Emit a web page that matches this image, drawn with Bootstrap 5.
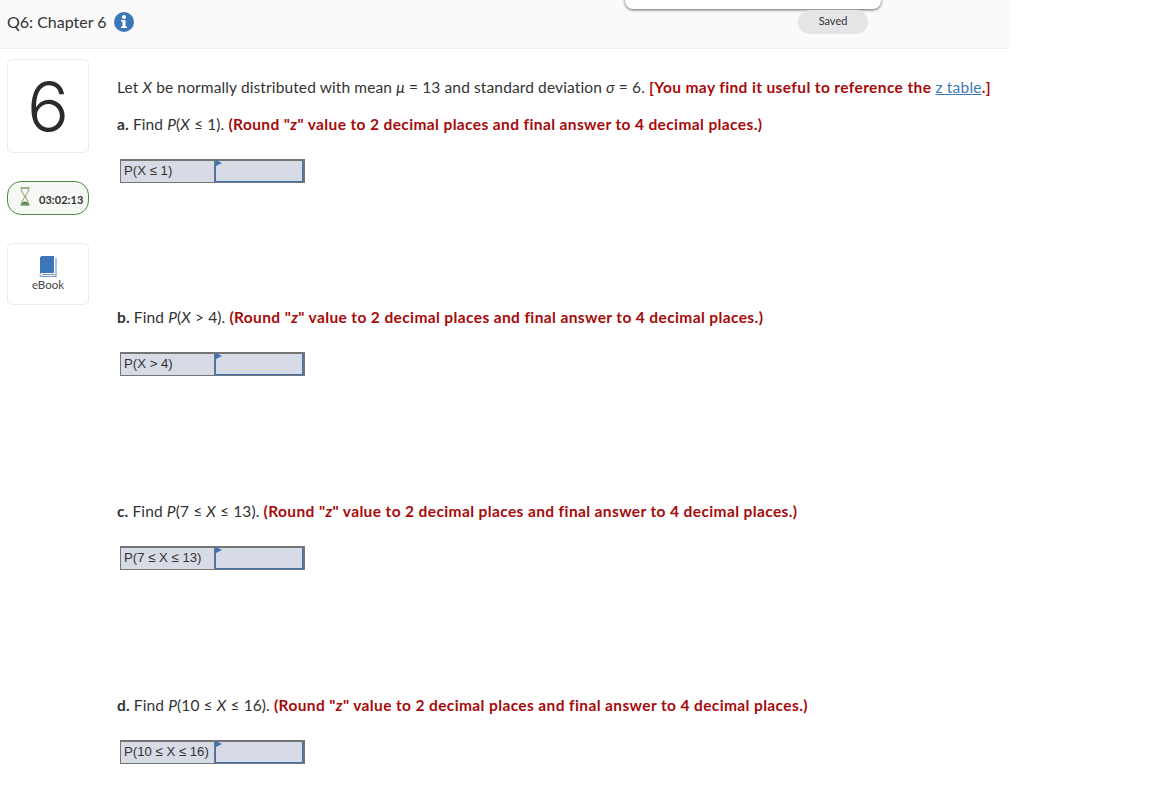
<!DOCTYPE html>
<html lang="en">
<head>
    <meta charset="UTF-8">
    <meta name="viewport" content="width=device-width, initial-scale=1.0">
    <title>Q6: Chapter 6</title>
    <link rel="stylesheet" href="https://cdn.jsdelivr.net/npm/bootstrap@5.3.2/dist/css/bootstrap.min.css">
    <style>
        html, body { height: 791px; overflow: hidden; }
        body {
            font-family: "Lato", "Liberation Sans", sans-serif;
            color: #333;
            background: #fff;
        }
        .page-wrap { width: 1009px; position: relative; }
        .top-head {
            height: 49px;
            background: #fafafa;
            border-bottom: 1px solid #eee;
            padding: 0 0 4px 7px;
            font-size: 16px;
        }
        .info-dot { margin-left: 7px; }
        .saved-pill {
            position: absolute;
            left: 798px;
            top: 10px;
            width: 70px;
            height: 24px;
            padding-bottom: 2px;
            border-radius: 12px;
            background: #e5e4e6;
            font-size: 11px;
        }
        .top-popup {
            position: absolute;
            left: 625px;
            top: -10px;
            width: 256px;
            height: 19px;
            background: #fff;
            border-radius: 8px;
            box-shadow: 0 1px 3px rgba(0,0,0,.6);
        }
        .side-col { width: 82px; margin-left: 7px; padding-top: 10px; }
        .tile {
            border: 1px solid #ececec;
            border-radius: 5px;
            background: #fff;
        }
        .num-tile { height: 94px; padding-top: 2px; font-family: "Inter", sans-serif; font-weight: 300; font-size: 70px; line-height: 1; color: #2b2b2b; }
        .timer-box {
            height: 34px;
            margin-top: 28px;
            padding: 0 0 0 11px;
            border: 1px solid #4f8a43;
            border-radius: 14px;
            background: #f6f8f5;
            font-size: 11px;
            font-weight: 700;
            gap: 8px;
        }
        .timer-box span { padding-top: 5px; letter-spacing: .05px; }
        .timer-box svg { margin-top: -4px; }
        .book-tile { height: 62px; margin-top: 28px; padding-top: 12px; font-size: 11.5px; line-height: 16px; color: #444; }
        .main-col { margin-left: 28px; padding-top: 28px; font-size: 15.5px; line-height: 20px; letter-spacing: .12px; }
        .main-col p { margin: 0; white-space: nowrap; }
        .intro-line { margin-bottom: 17px !important; }
        .part-block { height: 194px; }
        .part-block:first-of-type { height: 193px; }
        .part-block:last-of-type { height: auto; }
        .red-note { color: #a70a0a; font-weight: 700; letter-spacing: .38px; }
        .red-note a { color: #3d7ab8; font-weight: 400; letter-spacing: .2px; }
        .answer-row {
            display: flex;
            width: 185px;
            height: 24px;
            margin: 25px 0 0 3px;
            font-family: "Liberation Sans", Arial, sans-serif;
            font-size: 13.2px;
            letter-spacing: 0;
            background: #d7dbe6;
            border: 1px solid #757575;
            border-top-width: 2px;
            border-right-width: 2px;
        }
        .answer-label { width: 94px; padding-left: 3px; line-height: 20px; white-space: nowrap; border-right: 1px solid #757575; }
        .answer-cell { flex: 1; position: relative; border: 1px solid #3d72b4; border-top: 0; }
        .answer-cell::before {
            content: "";
            position: absolute;
            left: 0;
            top: -1px;
            border-left: 6px solid #3d72b4;
            border-top: 3px solid transparent;
            border-bottom: 3px solid transparent;
        }
    </style>
</head>

<body>
    <div class="page-wrap">
        <div class="top-popup"></div>
        <div class="top-head d-flex align-items-center">
            <span>Q6: Chapter 6</span>
            <svg class="info-dot" width="20" height="20" viewBox="0 0 20 20">
                <circle cx="10" cy="10" r="10" fill="#3d75b9"/>
                <circle cx="10" cy="5" r="2" fill="#fff"/>
                <path d="M7 8h4.500v6.500H13V16H7v-1.500h1.500V9.500H7z" fill="#fff"/>
            </svg>
        </div>
        <div class="saved-pill d-flex align-items-center justify-content-center">Saved</div>

        <div class="d-flex">
            <div class="side-col flex-shrink-0">
                <div class="tile num-tile d-flex align-items-center justify-content-center">6</div>
                <div class="timer-box d-flex align-items-center">
                    <svg width="12" height="19" viewBox="0 0 12 19">
                        <path d="M1.500 1h9M1.500 18h9" stroke="#7d9a74" stroke-width="1.300" fill="none"/>
                        <path d="M2.500 1c-1 4 3 6 3 8.500C5.500 12 1.500 14 2.500 18M9.500 1c1 4-3 6-3 8.500C6.500 12 10.500 14 9.500 18" stroke="#a8a37c" stroke-width="1.100" fill="none"/>
                        <path d="M2 17.500c.5-2 2.500-3 4-3s3.500 1 4 3z" fill="#4f8a43"/>
                    </svg>
                    <span>03:02:13</span>
                </div>
                <div class="tile book-tile d-flex flex-column align-items-center">
                    <svg width="18" height="21" viewBox="0 0 18 21">
                        <path d="M3 0h12v17H3C2 17 1 17.500 1 18.500V2c0-1 1-2 2-2z" fill="#3d75b9"/>
                        <path d="M1 18.500C1 19.500 2 20.500 3 20.500h14V2" stroke="#6a9fd6" stroke-width="1.200" fill="none"/>
                        <path d="M3 18.600h13" stroke="#8a8a8a" stroke-width="1"/>
                    </svg>
                    <span>eBook</span>
                </div>
            </div>

            <div class="main-col flex-grow-1">
                <p class="intro-line">Let <i>X</i> be normally distributed with mean <i>μ</i> = 13 and standard deviation <i>σ</i> = 6. <span class="red-note">[You may find it useful to reference the <a href="#">z table</a>.]</span></p>

                <div class="part-block">
                    <p><b>a.</b> Find <i>P</i>(<i>X</i> ≤ 1). <span class="red-note">(Round "<i>z</i>" value to 2 decimal places and final answer to 4 decimal places.)</span></p>
                    <div class="answer-row">
                        <div class="answer-label">P(X ≤ 1)</div>
                        <div class="answer-cell"></div>
                    </div>
                </div>
                <div class="part-block">
                    <p><b>b.</b> Find <i>P</i>(<i>X</i> &gt; 4). <span class="red-note">(Round "<i>z</i>" value to 2 decimal places and final answer to 4 decimal places.)</span></p>
                    <div class="answer-row">
                        <div class="answer-label">P(X &gt; 4)</div>
                        <div class="answer-cell"></div>
                    </div>
                </div>
                <div class="part-block">
                    <p><b>c.</b> Find <i>P</i>(7 ≤ <i>X</i> ≤ 13). <span class="red-note">(Round "<i>z</i>" value to 2 decimal places and final answer to 4 decimal places.)</span></p>
                    <div class="answer-row">
                        <div class="answer-label">P(7 ≤ X ≤ 13)</div>
                        <div class="answer-cell"></div>
                    </div>
                </div>
                <div class="part-block">
                    <p><b>d.</b> Find <i>P</i>(10 ≤ <i>X</i> ≤ 16). <span class="red-note">(Round "<i>z</i>" value to 2 decimal places and final answer to 4 decimal places.)</span></p>
                    <div class="answer-row">
                        <div class="answer-label">P(10 ≤ X ≤ 16)</div>
                        <div class="answer-cell"></div>
                    </div>
                </div>
            </div>
        </div>
    </div>

    <script src="https://cdn.jsdelivr.net/npm/bootstrap@5.3.2/dist/js/bootstrap.bundle.min.js"></script>
</body>
</html>
